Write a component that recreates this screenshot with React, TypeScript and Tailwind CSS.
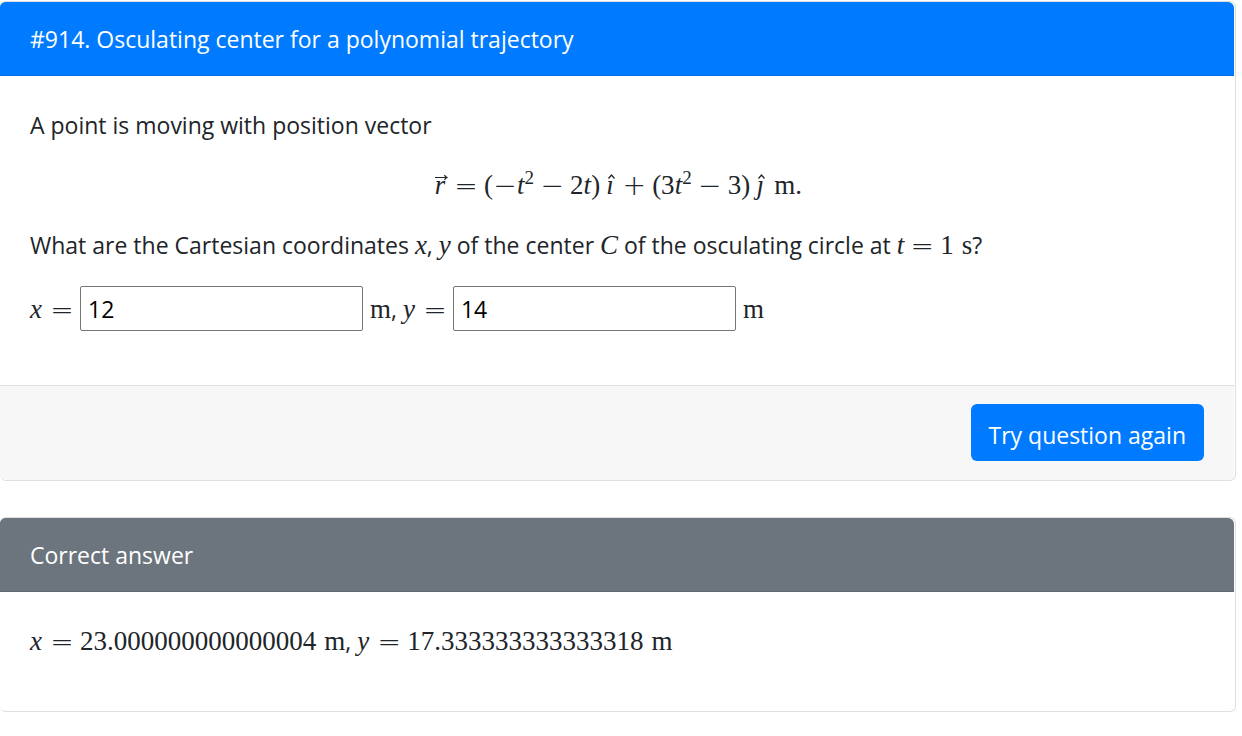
import type { ReactNode } from "react";

type Kids = { children: ReactNode };

/* ================= MATH PIECES ================= */

function Math({ children }: Kids) {
  return (
    <span className="inline-flex items-baseline whitespace-nowrap font-['Liberation_Serif',serif] text-[27px] leading-9">
      {children}
    </span>
  );
}

// italic variable
function Var({ children }: Kids) {
  return <i className="min-w-[14px]">{children}</i>;
}

// thin, wide sign, lowered onto the math axis
function Sign({ children }: Kids) {
  return (
    <span className="w-6 translate-y-px text-center font-['DejaVu_Sans',sans-serif] text-[28px] leading-8 font-extralight">
      {children}
    </span>
  );
}

// relation or binary operator
function Op({ children }: Kids) {
  return (
    <span className="mx-[6px] inline-flex items-baseline">
      <Sign>{children}</Sign>
    </span>
  );
}

function Sup({ children }: Kids) {
  return <sup className="top-0 -translate-y-[10px] text-[19px] leading-none">{children}</sup>;
}

function Hat({ children }: Kids) {
  return (
    <span className="relative ml-1 min-w-3 text-center">
      <i>{children}</i>
      <svg className="absolute top-[7px] left-[3px]" width="9" height="5" viewBox="0 0 9 5" fill="none" stroke="currentColor" strokeWidth="1.3">
        <path d="M1.5 4.5 4.5 1 7.5 4.5" />
      </svg>
    </span>
  );
}

function Vec({ children }: Kids) {
  return (
    <span className="relative min-w-4 text-center">
      <i>{children}</i>
      <svg className="absolute top-[7px] left-[3px]" width="13" height="7" viewBox="0 0 13 7" fill="none" stroke="currentColor" strokeWidth="1.2">
        <path d="M0 3.5H12M9.5 1C10 2.5 11 3.2 12.5 3.5C11 3.8 10 4.5 9.5 6" />
      </svg>
    </span>
  );
}

/* ================= CARD ================= */

function Card({ children }: Kids) {
  return (
    <section className="overflow-hidden rounded-md border border-l-0 border-[#dfdfdf] bg-white pr-px">
      {children}
    </section>
  );
}

const header = "rounded-tr-md border-b px-[30px] pt-[19px] pb-[18px] text-white";
const field =
  "mr-[7px] h-[45px] w-[283px] min-w-0 rounded-xs border border-[#767676] px-[7px] text-black";

export default function App() {
  return (
    <main className="space-y-9 pt-px pr-[6px] font-['Open_Sans',sans-serif] text-[23px] leading-9 text-[#212529]">

      {/* ================= QUESTION ================= */}
      <Card>
        <h1 className={`${header} border-[#006fe6] bg-[#007bff]`}>
          #914. Osculating center for a polynomial trajectory
        </h1>

        <div className="px-[30px] pt-[31px] pb-[54px]">
          <div className="space-y-6">
            <p>A point is moving with position vector</p>

            <p className="text-center">
              <Math>
                <Vec>r</Vec>
                <Op>=</Op>
                <span>(</span>
                <Sign>−</Sign>
                <i>t</i>
                <Sup>2</Sup>
                <Op>−</Op>
                <span>2<i>t</i></span>
                <span>)</span>
                <Hat>ı</Hat>
                <Op>+</Op>
                <span>(3</span>
                <i>t</i>
                <Sup>2</Sup>
                <Op>−</Op>
                <span>3)</span>
                <Hat>ȷ</Hat>
                <span className="ml-2">m.</span>
              </Math>
            </p>

            <p>
              What are the Cartesian coordinates <Math><i>x</i></Math>, <Math><i>y</i></Math> of
              the center <Math><i>C</i></Math> of the osculating circle at{" "}
              <Math><i>t</i><Op>=</Op>1<span className="ml-2">s</span></Math>?
            </p>
          </div>

          <div className="mt-[23px] flex flex-wrap items-center">
            <label htmlFor="answer-x">
              <Math><Var>x</Var><Op>=</Op></Math>
            </label>
            <input id="answer-x" className={field} type="text" defaultValue="12" />
            <span><Math>m</Math>,</span>
            <label htmlFor="answer-y" className="ml-[6px]">
              <Math><Var>y</Var><Op>=</Op></Math>
            </label>
            <input id="answer-y" className={field} type="text" defaultValue="14" />
            <Math>m</Math>
          </div>
        </div>

        <div className="flex justify-end border-t border-[#dfdfdf] bg-[#f7f7f7] px-[30px] pt-[18px] pb-[19px]">
          <button type="button" className="h-[57px] rounded-md bg-[#007bff] px-[18px] pt-1 text-white">
            Try question again
          </button>
        </div>
      </Card>

      {/* ================= CORRECT ANSWER ================= */}
      <Card>
        <h2 className={`${header} border-[#616971] bg-[#6c757d]`}>Correct answer</h2>

        <div className="px-[30px] pt-[31px] pb-[52px]">
          <p>
            <Math><Var>x</Var><Op>=</Op>23.000000000000004<span className="ml-2">m</span></Math>,{" "}
            <Math><Var>y</Var><Op>=</Op>17.333333333333318<span className="ml-2">m</span></Math>
          </p>
        </div>
      </Card>

    </main>
  );
}
